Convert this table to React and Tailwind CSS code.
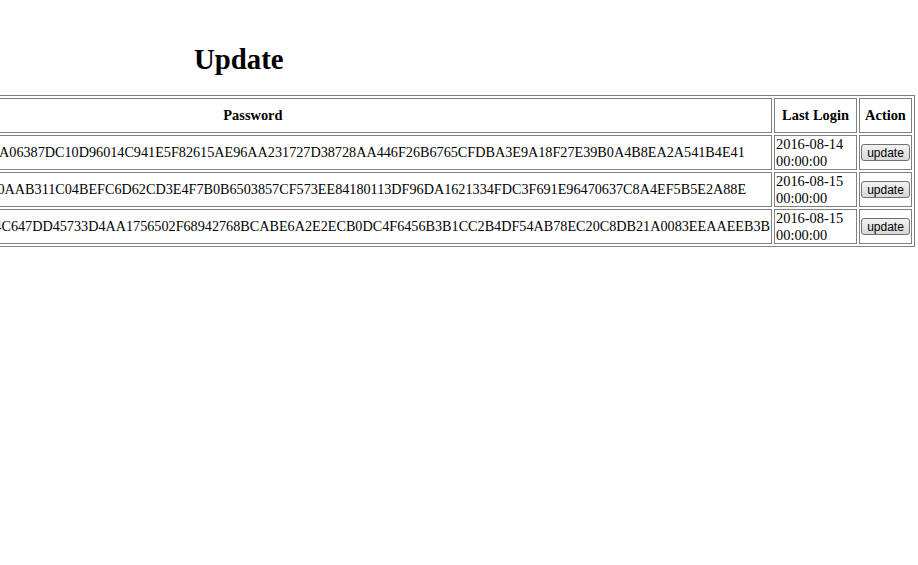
import React from "react";

const rows = [
  {
    password: "3F9B2C7E81D4A56F0B3E9C27D18A4F6E5A06387DC10D96014C941E5F82615AE96AA231727D38728AA446F26B6765CFDBA3E9A18F27E39B0A4B8EA2A541B4E41",
    lastLogin: ["2016-08-14", "00:00:00"],
  },
  {
    password: "7D2E4A9C1B86F3E05D7A2C9B4E18F6AD0AAB311C04BEFC6D62CD3E4F7B0B6503857CF573EE84180113DF96DA1621334FDC3F691E96470637C8A4EF5B5E2A88E",
    lastLogin: ["2016-08-15", "00:00:00"],
  },
  {
    password: "9E1A5D3B7C24F80E6B9D1A4C7F35E28A4C647DD45733D4AA1756502F68942768BCABE6A2E2ECB0DC4F6456B3B1CC2B4DF54AB78EC20C8DB21A0083EEAAEEB3B",
    lastLogin: ["2016-08-15", "00:00:00"],
  },
];

const cell = "border border-[#808080] px-[1px] py-0 leading-[16.5px] align-middle";

export default function App() {
  return (
    <div className="w-[918px] h-[565px] bg-white overflow-hidden text-black font-['Times_New_Roman','Liberation_Serif',serif] text-[14.4px]">
      <h1 className="pt-[43px] pl-[194px] mb-[19px] text-[28.8px] leading-[33px] font-bold">Update</h1>

      <div className="flex justify-end pr-[3px] overflow-hidden">
        <table className="shrink-0 border-separate border-spacing-[2px] border border-[#808080]">
          <thead>
            <tr>
              <th className={`${cell} h-[35px] text-center font-bold`}>Password</th>
              <th className={`${cell} w-[83px] text-center font-bold whitespace-nowrap`}>Last Login</th>
              <th className={`${cell} w-[53px] text-center font-bold`}>Action</th>
            </tr>
          </thead>
          <tbody>
            {rows.map((r, i) => (
              <tr key={i}>
                <td className={`${cell} whitespace-nowrap text-left text-[14.2px]`}>{r.password}</td>
                <td className={`${cell} text-left`}>
                  {r.lastLogin[0]}
                  <br />
                  {r.lastLogin[1]}
                </td>
                <td className={`${cell} text-center`}>
                  <button className="inline-block h-[17px] px-[5px] border border-[#707070] rounded-[3px] bg-gradient-to-b from-[#f2f2f2] to-[#d8d8d8] font-['Arial','Liberation_Sans',sans-serif] text-[12px] leading-[14px] text-black">
                    update
                  </button>
                </td>
              </tr>
            ))}
          </tbody>
        </table>
      </div>
    </div>
  );
}
